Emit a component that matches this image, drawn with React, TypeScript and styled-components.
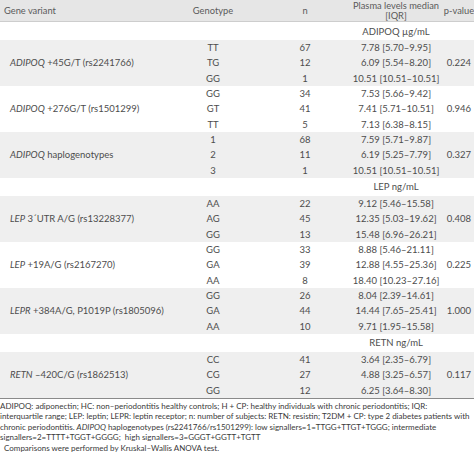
import React from 'react'
import styled, { createGlobalStyle } from 'styled-components'

const GlobalStyle = createGlobalStyle`
  html, body {
    margin: 0;
    padding: 0;
    background: #ffffff;
    overflow: hidden;
  }
`

// gene | genotype | n | plasma | p-value (p column has its own left padding)
const COLUMNS = '180px 66px 118px 64px 48px'

const Page = styled.div`
  width: 476px;
  font-family: Lato, 'Open Sans', sans-serif;
  color: #4d4d4d;
`

const Table = styled.div`
  display: flex;
  flex-direction: column;
  border-bottom: 1px solid #8a8a8a;
`

const HeaderRow = styled.div`
  display: grid;
  grid-template-columns: ${COLUMNS};
  height: 21px;
  background: #e6e6e6;
  border-bottom: 1px solid #cdcdcd;
  font-size: 9.3px;
  color: #5a5a5a;
`

const HeadCell = styled.div<{ $left?: boolean; $p?: boolean }>`
  display: flex;
  flex-direction: column;
  align-items: ${(p) => (p.$left ? 'flex-start' : 'center')};
  justify-content: center;
  padding-left: ${(p) => (p.$left ? '4px' : p.$p ? '14px' : '0')};
  line-height: 9.5px;
  white-space: nowrap;
  text-align: center;
`

const UnitRow = styled.div`
  display: grid;
  grid-template-columns: ${COLUMNS};
  height: 18px;
  font-size: 9.5px;
`

const UnitLabel = styled.div`
  grid-column: 4;
  display: flex;
  align-items: center;
  justify-content: center;
  white-space: nowrap;
`

const Group = styled.div<{ $shaded: boolean }>`
  display: grid;
  grid-template-columns: ${COLUMNS};
  grid-template-rows: repeat(3, 15.33px);
  background: ${(p) => (p.$shaded ? '#efefef' : '#ffffff')};
  font-size: 9.5px;
`

const GeneCell = styled.div`
  grid-column: 1;
  grid-row: 1 / 4;
  display: flex;
  align-items: center;
  padding-left: 10px;
  white-space: pre;
`

const Cell = styled.div<{ $col: number; $row: number }>`
  grid-column: ${(p) => p.$col};
  grid-row: ${(p) => p.$row};
  display: flex;
  align-items: center;
  justify-content: center;
  white-space: nowrap;
`

const PCell = styled.div`
  grid-column: 5;
  grid-row: 1 / 4;
  display: flex;
  align-items: center;
  justify-content: center;
  padding-left: 14px;
`

const Notes = styled.div`
  padding-top: 2px;
  font-size: 8px;
  line-height: 10.4px;
  color: #3a3a3a;
`

const NoteLine = styled.div<{ $indent?: boolean }>`
  white-space: nowrap;
  padding-left: ${(p) => (p.$indent ? '4px' : '0')};
`

type Row = [string, string, string]

type Variant = {
  gene: string
  rest: string
  rows: Row[]
  p: string
}

const adipoq: Variant[] = [
  {
    gene: 'ADIPOQ',
    rest: ' +45G/T (rs2241766)',
    p: '0.224',
    rows: [
      ['TT', '67', '7.78 [5.70–9.95]'],
      ['TG', '12', '6.09 [5.54–8.20]'],
      ['GG', '1', '10.51 [10.51–10.51]'],
    ],
  },
  {
    gene: 'ADIPOQ',
    rest: ' +276G/T (rs1501299)',
    p: '0.946',
    rows: [
      ['GG', '34', '7.53 [5.66–9.42]'],
      ['GT', '41', '7.41 [5.71–10.51]'],
      ['TT', '5', '7.13 [6.38–8.15]'],
    ],
  },
  {
    gene: 'ADIPOQ',
    rest: ' haplogenotypes',
    p: '0.327',
    rows: [
      ['1', '68', '7.59 [5.71–9.87]'],
      ['2', '11', '6.19 [5.25–7.79]'],
      ['3', '1', '10.51 [10.51–10.51]'],
    ],
  },
]

const lep: Variant[] = [
  {
    gene: 'LEP',
    rest: ' 3´UTR A/G (rs13228377)',
    p: '0.408',
    rows: [
      ['AA', '22', '9.12 [5.46–15.58]'],
      ['AG', '45', '12.35 [5.03–19.62]'],
      ['GG', '13', '15.48 [6.96–26.21]'],
    ],
  },
  {
    gene: 'LEP',
    rest: ' +19A/G (rs2167270)',
    p: '0.225',
    rows: [
      ['GG', '33', '8.88 [5.46–21.11]'],
      ['GA', '39', '12.88 [4.55–25.36]'],
      ['AA', '8', '18.40 [10.23–27.16]'],
    ],
  },
  {
    gene: 'LEPR',
    rest: ' +384A/G, P1019P (rs1805096)',
    p: '1.000',
    rows: [
      ['GG', '26', '8.04 [2.39–14.61]'],
      ['GA', '44', '14.44 [7.65–25.41]'],
      ['AA', '10', '9.71 [1.95–15.58]'],
    ],
  },
]

const retn: Variant[] = [
  {
    gene: 'RETN',
    rest: ' –420C/G (rs1862513)',
    p: '0.117',
    rows: [
      ['CC', '41', '3.64 [2.35–6.79]'],
      ['CG', '27', '4.88 [3.25–6.57]'],
      ['GG', '12', '6.25 [3.64–8.30]'],
    ],
  },
]

const VariantGroup = ({ v, shaded }: { v: Variant; shaded: boolean }) => (
  <Group $shaded={shaded}>
    <GeneCell>
      <span>
        <i>{v.gene}</i>
        {v.rest}
      </span>
    </GeneCell>
    {v.rows.map((r, i) => (
      <React.Fragment key={i}>
        <Cell $col={2} $row={i + 1}>{r[0]}</Cell>
        <Cell $col={3} $row={i + 1}>{r[1]}</Cell>
        <Cell $col={4} $row={i + 1}>{r[2]}</Cell>
      </React.Fragment>
    ))}
    <PCell>{v.p}</PCell>
  </Group>
)

const Section = ({ unit, variants }: { unit: string; variants: Variant[] }) => (
  <>
    <UnitRow>
      <UnitLabel>{unit}</UnitLabel>
    </UnitRow>
    {variants.map((v, i) => (
      <VariantGroup key={i} v={v} shaded={i % 2 === 0} />
    ))}
  </>
)

const App = () => (
  <Page>
    <GlobalStyle />
    <Table>
      <HeaderRow>
        <HeadCell $left>Gene variant</HeadCell>
        <HeadCell>Genotype</HeadCell>
        <HeadCell>n</HeadCell>
        <HeadCell>
          <span>Plasma levels median</span>
          <span>[IQR]</span>
        </HeadCell>
        <HeadCell $p>p-value</HeadCell>
      </HeaderRow>
      <Section unit="ADIPOQ µg/mL" variants={adipoq} />
      <Section unit="LEP ng/mL" variants={lep} />
      <Section unit="RETN ng/mL" variants={retn} />
    </Table>
    <Notes>
      <NoteLine>
        ADIPOQ: adiponectin; HC: non–periodontitis healthy controls; H + CP: healthy individuals with chronic periodontitis; IQR:
      </NoteLine>
      <NoteLine>
        interquartile range; LEP: leptin; LEPR: leptin receptor; n: number of subjects: RETN: resistin; T2DM + CP: type 2 diabetes patients with
      </NoteLine>
      <NoteLine>
        chronic periodontitis. <i>ADIPOQ</i> haplogenotypes (rs2241766/rs1501299): low signallers=1=TTGG+TTGT+TGGG; intermediate
      </NoteLine>
      <NoteLine>signallers=2=TTTT+TGGT+GGGG;&nbsp; high signallers=3=GGGT+GGTT+TGTT</NoteLine>
      <NoteLine $indent>Comparisons were performed by Kruskal–Wallis ANOVA test.</NoteLine>
    </Notes>
  </Page>
)

export default App
